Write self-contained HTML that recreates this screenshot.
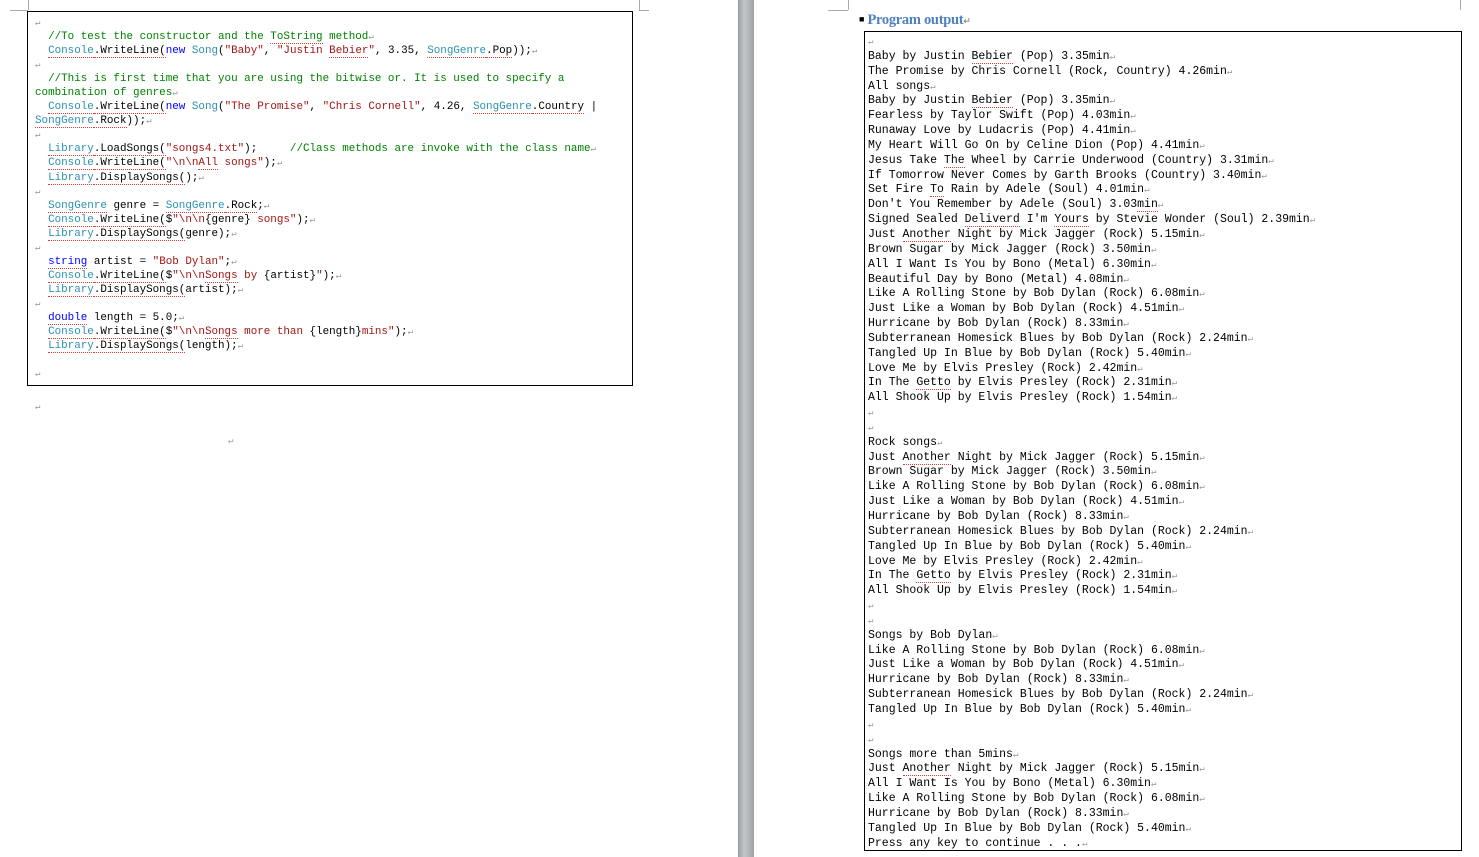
<!DOCTYPE html>
<html><head><meta charset="utf-8"><style>
body{margin:0;width:1479px;height:857px;background:#fff;position:relative;overflow:hidden;font-family:"Liberation Mono",monospace;}
.bar{position:absolute;left:738px;top:0;width:16px;height:857px;background:linear-gradient(90deg,#9a9ea3,#c3c6ca 40%,#b2b5b9 70%,#9da0a4);}
.box{position:absolute;border:1px solid #000;}
pre{margin:0;font-family:"Liberation Mono",monospace;white-space:pre;}
.code{position:absolute;left:35px;top:16px;font-size:10.9px;line-height:14.05px;color:#000;}
.out{position:absolute;left:868px;top:35px;font-size:11.5px;line-height:14.85px;color:#000;}
.r{color:#999;font-size:9px;line-height:0}
.c{color:#008000}.s{color:#a31515}.k{color:#0000ff}.t{color:#2b91af}
.u{border-bottom:1px dotted #e04040}
.mk{position:absolute;background:#aaa}
h3{position:absolute;left:859px;top:12px;margin:0;font-family:"Liberation Serif",serif;font-size:14.5px;font-weight:bold;color:#4f81bd;letter-spacing:-0.3px}
.ar{position:absolute;color:#999;font-size:9px;font-family:"Liberation Mono",monospace}
</style></head><body>
<div class="mk" style="left:28px;top:0;width:1px;height:10px"></div>
<div class="mk" style="left:10px;top:10px;width:18px;height:1px"></div>
<div class="mk" style="left:639px;top:0;width:1px;height:10px"></div>
<div class="mk" style="left:639px;top:10px;width:10px;height:1px"></div>
<div class="mk" style="left:848px;top:0;width:1px;height:10px"></div>
<div class="mk" style="left:828px;top:10px;width:20px;height:1px"></div>
<div class="mk" style="left:1460px;top:0;width:1px;height:10px"></div>
<div class="bar"></div>
<div class="box" style="left:27px;top:11px;width:604px;height:373px"></div>
<pre class="code"><span class="r">↵</span>
  <span class="c">//To test the constructor and the <span class="u">ToString</span> method</span><span class="r">↵</span>
  <span class="t u">Console</span><span class="u">.WriteLine(</span><span class="k">new</span> <span class="t">Song</span>(<span class="s">"Baby"</span>, <span class="s">"Justin <span class="u">Bebier</span>"</span>, 3.35, <span class="t u">SongGenre</span><span class="u">.Pop</span>));<span class="r">↵</span>
<span class="r">↵</span>
  <span class="c">//This is first time that you are using the bitwise or. It is used to specify a</span>
<span class="c">combination of genres</span><span class="r">↵</span>
  <span class="t u">Console</span><span class="u">.WriteLine(</span><span class="k">new</span> <span class="t">Song</span>(<span class="s">"The Promise"</span>, <span class="s">"Chris Cornell"</span>, 4.26, <span class="t u">SongGenre</span><span class="u">.Country</span> |
<span class="t u">SongGenre</span><span class="u">.Rock</span>));<span class="r">↵</span>
<span class="r">↵</span>
  <span class="t u">Library</span><span class="u">.LoadSongs(</span><span class="s">"songs4.txt"</span>);     <span class="c">//Class methods are invoke with the class name</span><span class="r">↵</span>
  <span class="t u">Console</span><span class="u">.WriteLine(</span><span class="s">"\n\n<span class="u">All</span> songs"</span>);<span class="r">↵</span>
  <span class="t u">Library</span><span class="u">.DisplaySongs(</span>);<span class="r">↵</span>
<span class="r">↵</span>
  <span class="t u">SongGenre</span> genre = <span class="t u">SongGenre</span><span class="u">.Rock</span>;<span class="r">↵</span>
  <span class="t u">Console</span><span class="u">.WriteLine(</span>$<span class="s">"\n\n</span>{genre}<span class="s"> songs"</span>);<span class="r">↵</span>
  <span class="t u">Library</span><span class="u">.DisplaySongs(</span>genre);<span class="r">↵</span>
<span class="r">↵</span>
  <span class="k u">string</span> artist = <span class="s">"Bob Dylan"</span>;<span class="r">↵</span>
  <span class="t u">Console</span><span class="u">.WriteLine(</span>$<span class="s">"\n\n<span class="u">Songs</span> by </span>{artist}<span class="s">"</span>);<span class="r">↵</span>
  <span class="t u">Library</span><span class="u">.DisplaySongs(</span>artist);<span class="r">↵</span>
<span class="r">↵</span>
  <span class="k u">double</span> length = 5.0;<span class="r">↵</span>
  <span class="t u">Console</span><span class="u">.WriteLine(</span>$<span class="s">"\n\n<span class="u">Songs</span> more than </span>{length}<span class="s">mins"</span>);<span class="r">↵</span>
  <span class="t u">Library</span><span class="u">.DisplaySongs(</span>length);<span class="r">↵</span>

<span class="r">↵</span></pre>
<div class="ar" style="left:35px;top:402px">↵</div>
<div class="ar" style="left:228px;top:436px">↵</div>
<h3><span style="color:#000;font-size:9px;vertical-align:2px">■</span> Program output<span class="r">↵</span></h3>
<div class="box" style="left:864px;top:31px;width:596px;height:818px"></div>
<pre class="out"><span class="r">↵</span>
Baby by Justin <span class="u">Bebier</span> (Pop) 3.35min<span class="r">↵</span>
The Promise by Chris Cornell (Rock, Country) 4.26min<span class="r">↵</span>
All songs<span class="r">↵</span>
Baby by Justin <span class="u">Bebier</span> (Pop) 3.35min<span class="r">↵</span>
Fearless by Taylor Swift (Pop) 4.03min<span class="r">↵</span>
Runaway Love by Ludacris (Pop) 4.41min<span class="r">↵</span>
My Heart Will Go On by Celine Dion (Pop) 4.41min<span class="r">↵</span>
Jesus Take <span class="u">The</span> Wheel by Carrie Underwood (Country) 3.31min<span class="r">↵</span>
If Tomorrow Never Comes by Garth Brooks (Country) 3.40min<span class="r">↵</span>
Set Fire <span class="u">To</span> Rain by Adele (Soul) 4.01min<span class="r">↵</span>
Don't You Remember by Adele (Soul) 3.03<span class="u">min</span><span class="r">↵</span>
Signed Sealed <span class="u">Deliverd</span> I'm <span class="u">Yours</span> by Stevie Wonder (Soul) 2.39min<span class="r">↵</span>
Just <span class="u">Another</span> Night by Mick Jagger (Rock) 5.15min<span class="r">↵</span>
Brown Sugar by Mick Jagger (Rock) 3.50min<span class="r">↵</span>
All I Want Is You by Bono (Metal) 6.30min<span class="r">↵</span>
Beautiful Day by Bono (Metal) 4.08min<span class="r">↵</span>
Like A Rolling Stone by Bob Dylan (Rock) 6.08min<span class="r">↵</span>
Just Like a Woman by Bob Dylan (Rock) 4.51min<span class="r">↵</span>
Hurricane by Bob Dylan (Rock) 8.33min<span class="r">↵</span>
Subterranean Homesick Blues by Bob Dylan (Rock) 2.24min<span class="r">↵</span>
Tangled Up In Blue by Bob Dylan (Rock) 5.40min<span class="r">↵</span>
Love Me by Elvis Presley (Rock) 2.42min<span class="r">↵</span>
In The <span class="u">Getto</span> by Elvis Presley (Rock) 2.31min<span class="r">↵</span>
All Shook Up by Elvis Presley (Rock) 1.54min<span class="r">↵</span>
<span class="r">↵</span>
<span class="r">↵</span>
Rock songs<span class="r">↵</span>
Just <span class="u">Another</span> Night by Mick Jagger (Rock) 5.15min<span class="r">↵</span>
Brown Sugar by Mick Jagger (Rock) 3.50min<span class="r">↵</span>
Like A Rolling Stone by Bob Dylan (Rock) 6.08min<span class="r">↵</span>
Just Like a Woman by Bob Dylan (Rock) 4.51min<span class="r">↵</span>
Hurricane by Bob Dylan (Rock) 8.33min<span class="r">↵</span>
Subterranean Homesick Blues by Bob Dylan (Rock) 2.24min<span class="r">↵</span>
Tangled Up In Blue by Bob Dylan (Rock) 5.40min<span class="r">↵</span>
Love Me by Elvis Presley (Rock) 2.42min<span class="r">↵</span>
In The <span class="u">Getto</span> by Elvis Presley (Rock) 2.31min<span class="r">↵</span>
All Shook Up by Elvis Presley (Rock) 1.54min<span class="r">↵</span>
<span class="r">↵</span>
<span class="r">↵</span>
Songs by Bob Dylan<span class="r">↵</span>
Like A Rolling Stone by Bob Dylan (Rock) 6.08min<span class="r">↵</span>
Just Like a Woman by Bob Dylan (Rock) 4.51min<span class="r">↵</span>
Hurricane by Bob Dylan (Rock) 8.33min<span class="r">↵</span>
Subterranean Homesick Blues by Bob Dylan (Rock) 2.24min<span class="r">↵</span>
Tangled Up In Blue by Bob Dylan (Rock) 5.40min<span class="r">↵</span>
<span class="r">↵</span>
<span class="r">↵</span>
Songs more than 5mins<span class="r">↵</span>
Just <span class="u">Another</span> Night by Mick Jagger (Rock) 5.15min<span class="r">↵</span>
All I Want Is You by Bono (Metal) 6.30min<span class="r">↵</span>
Like A Rolling Stone by Bob Dylan (Rock) 6.08min<span class="r">↵</span>
Hurricane by Bob Dylan (Rock) 8.33min<span class="r">↵</span>
Tangled Up In Blue by Bob Dylan (Rock) 5.40min<span class="r">↵</span>
Press any key to continue . . .<span class="r">↵</span></pre>
</body></html>
